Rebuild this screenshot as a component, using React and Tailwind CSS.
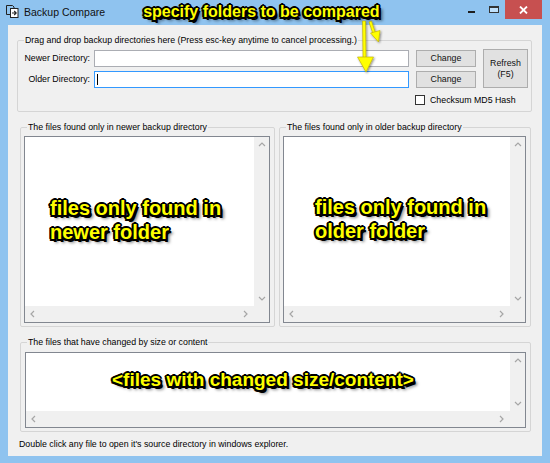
import React from "react";

const shadow =
  "[text-shadow:2px_0_0_#000,-2px_0_0_#000,0_2px_0_#000,0_-2px_0_#000,1.5px_1.5px_0_#000,-1.5px_-1.5px_0_#000,1.5px_-1.5px_0_#000,-1.5px_1.5px_0_#000,2.5px_2.5px_0_#000,4px_4px_3px_rgba(0,0,0,0.5)]";

function Chevron({ dir }) {
  const pts = {
    up: "1,5 4,2 7,5",
    down: "1,2 4,5 7,2",
    left: "5,1 2,4 5,7",
    right: "2,1 5,4 2,7",
  }[dir];
  return (
    <svg width="8" height="8" viewBox="0 0 8 8" className="block">
      <polyline points={pts} fill="none" stroke="#a6a6a6" strokeWidth="1.2" />
    </svg>
  );
}

function ScrollList({ heightClass, children }) {
  return (
    <div className={`${heightClass} border border-[#828790] bg-white grid grid-cols-[1fr_15px] grid-rows-[1fr_16px]`}>
      <div className="bg-white overflow-hidden">{children}</div>
      <div className="bg-[#f0f0f0] flex flex-col items-center justify-between pt-[4px] pb-[3px]">
        <Chevron dir="up" />
        <Chevron dir="down" />
      </div>
      <div className="bg-[#f0f0f0] flex items-center justify-between pl-[4px] pr-[4px]">
        <Chevron dir="left" />
        <Chevron dir="right" />
      </div>
      <div className="bg-[#f0f0f0]" />
    </div>
  );
}

function Button({ className, children }) {
  return (
    <div
      className={`${className} border border-[#adadad] bg-[#e1e1e1] flex items-center justify-center text-center text-[#111]`}
    >
      {children}
    </div>
  );
}

function TitleIcon() {
  return (
    <svg width="13" height="13" viewBox="0 0 13 13" className="block">
      <path d="M0.5 0.5 H6.5 L8 2 V3 M0.5 0.5 V9.5 H4" fill="none" stroke="#222" strokeWidth="1" />
      <rect x="4.5" y="3.5" width="7.5" height="9" fill="#fff" stroke="#222" strokeWidth="1" />
      <path d="M6 8 H10 M8.2 6 L10.2 8 L8.2 10" fill="none" stroke="#222" strokeWidth="1.1" />
    </svg>
  );
}

export default function App() {
  return (
    <div className="relative w-[550px] h-[463px] bg-[#8fc3ef] flex flex-col overflow-hidden font-['Liberation_Sans',Arial,sans-serif]">
      {/* Title bar */}
      <div className="h-[25px] shrink-0 flex items-start">
        <div className="ml-[6px] mt-[5px]">
          <TitleIcon />
        </div>
        <span className="ml-[5px] mt-[6px] text-[10.5px] leading-[13px] text-[#111]">Backup Compare</span>
        <span className={`ml-[38px] mt-[2px] text-[16px] font-bold leading-[20px] text-[#ffff00] ${shadow}`}>
          specify folders to be compared
        </span>
        <div className="ml-auto mr-[8px] flex items-start">
          <div className="mt-[11px] w-[7px] h-[2px] bg-[#1e1e1e]" />
          <div className="ml-[14px] mt-[6px] w-[10px] h-[7px] border border-[#333] border-t-2 bg-[#bfe0fb]" />
          <div className="ml-[6px] w-[37px] h-[19px] bg-[#c75050] flex items-center justify-center">
            <svg width="9" height="8" viewBox="0 0 9 8" className="block">
              <path d="M1 0.5 L8 7.5 M8 0.5 L1 7.5" stroke="#fff" strokeWidth="1.8" />
            </svg>
          </div>
        </div>
      </div>

      {/* Client area */}
      <div className="mx-[8px] h-[431px] shrink-0 bg-[#f0f0f0] flex flex-col text-[8.8px] text-black">
        {/* Group 1 */}
        <fieldset className="mt-[9px] ml-[9px] mr-[10px] border border-[#d5d5d5] rounded-[2px] min-w-0">
          <legend className="ml-[6px] px-[1px] leading-[12px]">
            Drag and drop backup directories here (Press esc-key anytime to cancel processing.)
          </legend>
          <div className="pt-[3px] pb-[6px] flex flex-col">
            <div className="flex items-start">
              <div className="w-[72px] pt-[1px] flex flex-col items-end gap-[4px]">
                <div className="h-[17px] leading-[17px]">Newer Directory:</div>
                <div className="h-[17px] leading-[17px]">Older Directory:</div>
              </div>
              <div className="ml-[4px] w-[315px] pt-[1px] flex flex-col gap-[4px]">
                <div className="h-[17px] border border-[#abadb3] bg-white" />
                <div className="h-[17px] border border-[#3399ff] bg-white flex items-center pl-[2px]">
                  <div className="w-[1px] h-[11px] bg-black" />
                </div>
              </div>
              <div className="ml-[7px] w-[60px] pt-[1px] flex flex-col gap-[4px]">
                <Button className="h-[17px]">Change</Button>
                <Button className="h-[17px]">Change</Button>
              </div>
              <Button className="ml-[7px] w-[45px] h-[39px] leading-[11px]">
                Refresh
                <br />
                (F5)
              </Button>
            </div>
            <div className="ml-[397px] mt-[7px] h-[10px] flex items-center">
              <div className="w-[10px] h-[10px] border border-[#333] bg-white" />
              <span className="ml-[5px] leading-[10px]">Checksum MD5 Hash</span>
            </div>
          </div>
        </fieldset>

        {/* Group 2 row */}
        <div className="mt-[9px] ml-[12px] mr-[11px] flex gap-[4px]">
          <fieldset className="w-[255px] shrink-0 border border-[#d5d5d5] rounded-[2px] min-w-0">
            <legend className="ml-[6px] px-[1px] leading-[12px]">The files found only in newer backup directory</legend>
            <div className="pt-[3px] pl-[3px] pr-[4px] pb-[3px]">
              <ScrollList heightClass="h-[187px]">
                <div className={`pl-[25px] pt-[59px] text-[20px] font-bold leading-[24px] text-[#ffff00] ${shadow}`}>
                  files only found in
                  <br />
                  newer folder
                </div>
              </ScrollList>
            </div>
          </fieldset>
          <fieldset className="flex-1 border border-[#d5d5d5] rounded-[2px] min-w-0">
            <legend className="ml-[6px] px-[1px] leading-[12px]">The files found only in older backup directory</legend>
            <div className="pt-[3px] pl-[3px] pr-[4px] pb-[3px]">
              <ScrollList heightClass="h-[187px]">
                <div className={`pl-[31px] pt-[58px] text-[20px] font-bold leading-[24px] text-[#ffff00] ${shadow}`}>
                  files only found in
                  <br />
                  older folder
                </div>
              </ScrollList>
            </div>
          </fieldset>
        </div>

        {/* Group 3 */}
        <fieldset className="mt-[9px] ml-[12px] mr-[11px] border border-[#d5d5d5] rounded-[2px] min-w-0">
          <legend className="ml-[6px] px-[1px] leading-[12px]">The files that have changed by size or content</legend>
          <div className="pt-[4px] pl-[4px] pr-[4px] pb-[3px]">
            <ScrollList heightClass="h-[76px]">
              <div className={`pl-[86px] pt-[16px] text-[19px] font-bold leading-[22px] text-[#ffff00] whitespace-nowrap ${shadow}`}>
                &lt;files with changed size/content&gt;
              </div>
            </ScrollList>
          </div>
        </fieldset>

        <div className="mt-[6px] ml-[11px] leading-[12px]">
          Double click any file to open it's source directory in windows explorer.
        </div>
      </div>

      {/* Annotation arrows */}
      <svg className="absolute left-0 top-0 pointer-events-none" width="550" height="463" viewBox="0 0 550 463">
        <defs>
          <filter id="ds" x="-50%" y="-50%" width="200%" height="200%">
            <feDropShadow dx="1" dy="1" stdDeviation="0.8" floodColor="#000" floodOpacity="0.45" />
          </filter>
        </defs>
        <g filter="url(#ds)" fill="#ffff00" stroke="#b9a800" strokeWidth="0.6">
          <polygon points="362.5,21 365.5,21 366,58 363,58" />
          <polygon points="357.5,57 373.5,57 366,72" />
          <polygon points="369,22 371.5,21 375.5,33 373,34" />
          <polygon points="370.5,33 380,30.5 378.5,42" />
        </g>
      </svg>
    </div>
  );
}
